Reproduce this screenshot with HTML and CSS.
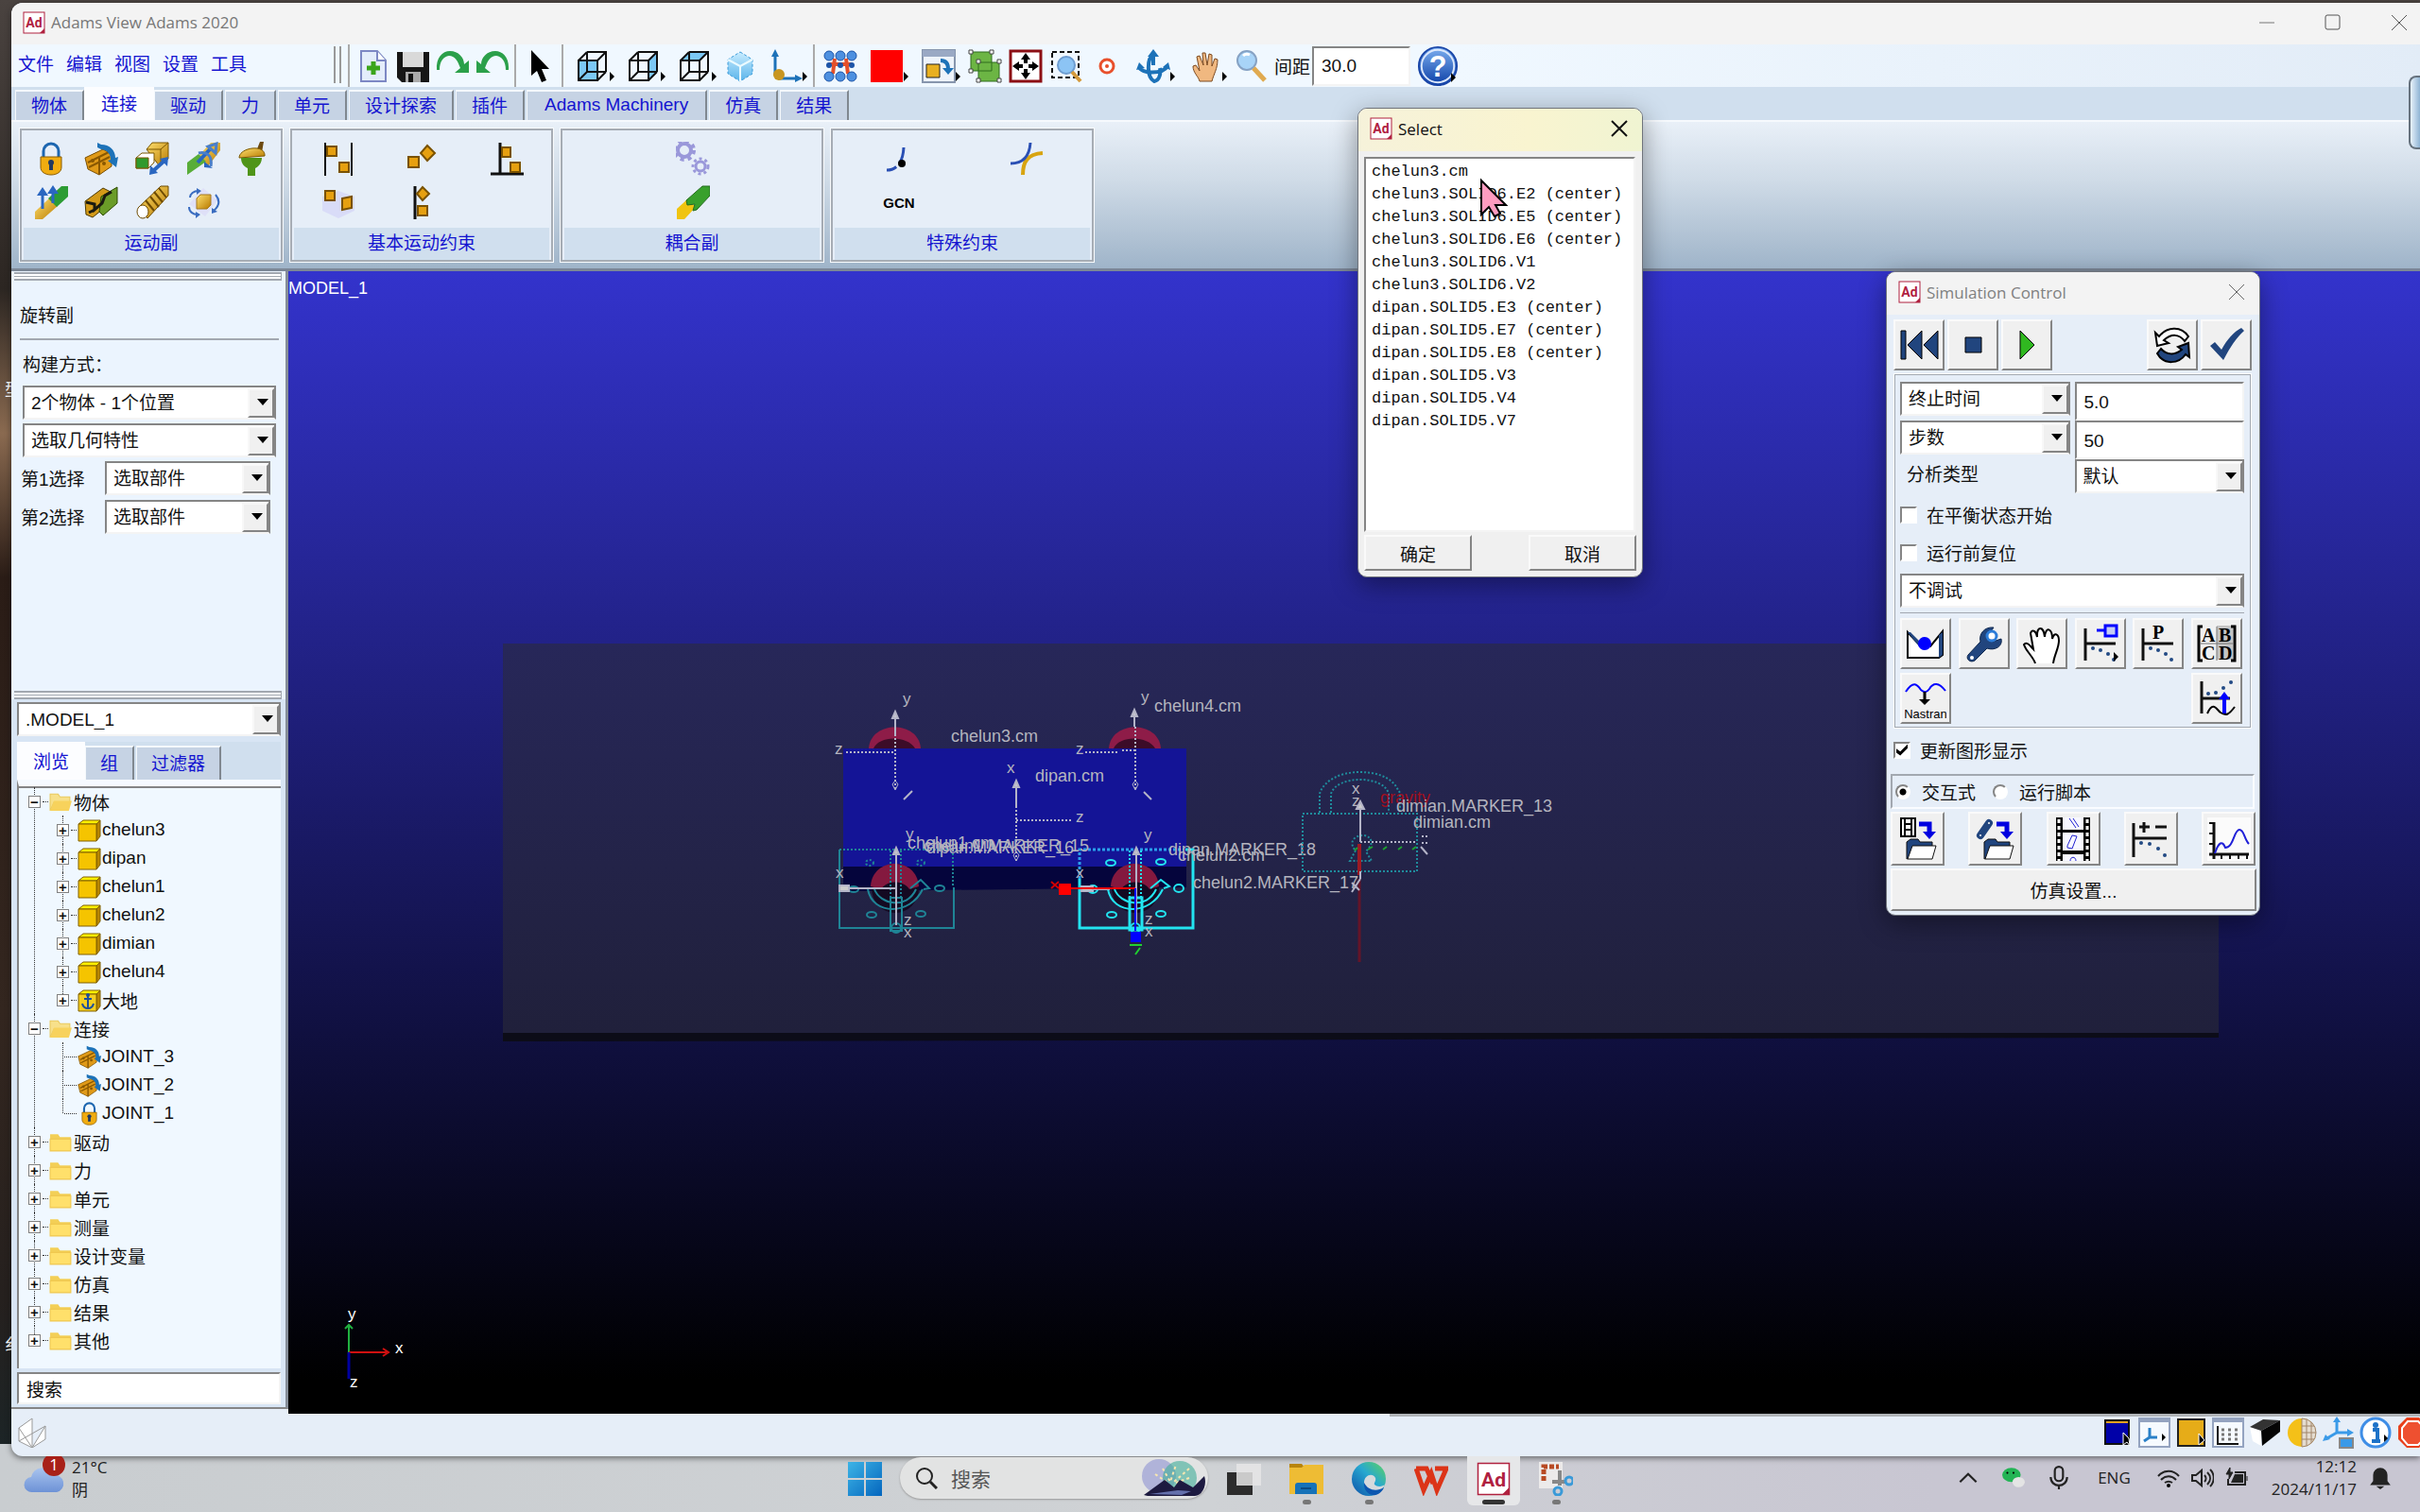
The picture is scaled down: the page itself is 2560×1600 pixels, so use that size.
FILE: index.html
```html
<!DOCTYPE html>
<html lang="zh">
<head>
    <meta charset="utf-8">
    <title>Adams View Adams 2020</title>
    <link rel="stylesheet" href="styles.css">
</head>
<body>
    <!-- shared icons -->
    <svg class="defs">
        <defs>
            <linearGradient id="gold" x1="0" y1="0" x2="1" y2="1"><stop offset="0" stop-color="#ffe070"/><stop offset="1" stop-color="#b87a00"/></linearGradient>
            <linearGradient id="sky" x1="0" y1="0" x2="0" y2="1"><stop offset="0" stop-color="#c8ecff"/><stop offset="1" stop-color="#5ab4ea"/></linearGradient>
            <linearGradient id="blueball" x1="0" y1="0" x2="0" y2="1"><stop offset="0" stop-color="#7db0f0"/><stop offset="1" stop-color="#0c3fa6"/></linearGradient>
            <linearGradient id="cloud" x1="0" y1="0" x2="0" y2="1"><stop offset="0" stop-color="#a9c4ee"/><stop offset="1" stop-color="#6d92d6"/></linearGradient>
            <linearGradient id="win" x1="0" y1="0" x2="1" y2="1"><stop offset="0" stop-color="#3cb4e6"/><stop offset="1" stop-color="#0566be"/></linearGradient>
            <linearGradient id="slab" x1="0" y1="0" x2="0" y2="1"><stop offset="0" stop-color="#272759"/><stop offset="1" stop-color="#20203b"/></linearGradient>
            <linearGradient id="edge" x1="1" y1="0" x2="0" y2="1"><stop offset="0" stop-color="#5fd45c"/><stop offset=".45" stop-color="#28a8d0"/><stop offset="1" stop-color="#0b4fa8"/></linearGradient>
        </defs>
        <symbol id="ad" viewBox="0 0 24 24">
            <rect x="1" y="1" width="22" height="22" fill="#fff" stroke="#b0213f" stroke-width="1"/>
            <path d="M23 18v5h-5z" fill="#b0213f"/>
            <text x="12" y="17" text-anchor="middle" class="ad-text">Ad</text>
        </symbol>
        <symbol id="folder" viewBox="0 0 24 20">
            <path d="M1 19V2h8l2 3h11v14z" fill="#f3cf56"/>
            <path d="M1 7h21v12H1z" fill="#ffe06b" stroke="#f0c850"/>
        </symbol>
        <symbol id="folder-open" viewBox="0 0 24 20">
            <path d="M1 19V2h8l2 3h10v5H5z" fill="#f7e08a" stroke="#e9c95a"/>
            <path d="M1 19l4-10h18l-3 10z" fill="#f7d25c"/>
        </symbol>
        <symbol id="part" viewBox="0 0 25 25">
            <path d="M1 6l5-4h18l-4 4z" fill="#fff000" stroke="#806000"/>
            <path d="M20 6l4-4v17l-4 5z" fill="#b88600" stroke="#806000"/>
            <path d="M1 6h19v18H1z" fill="#f5c400" stroke="#806000"/>
        </symbol>
        <symbol id="ground" viewBox="0 0 25 25">
            <path d="M1 6l5-4h18l-4 4z" fill="#fff000" stroke="#806000"/>
            <path d="M20 6l4-4v17l-4 5z" fill="#b88600" stroke="#806000"/>
            <path d="M1 6h19v18H1z" fill="#f5cf20" stroke="#806000"/>
            <path d="M11 8v13M7 11h8M5 16c1 4 3 5 6 5s5-1 6-5" fill="none" stroke="#1c4f9c" stroke-width="2"/>
            <circle cx="11" cy="7" r="2" fill="#1c4f9c"/>
        </symbol>
        <symbol id="lock" viewBox="0 0 36 36">
            <path d="M10 17V10a8 8 0 0 1 16 0v7" fill="none" stroke="#1d66b0" stroke-width="3"/>
            <path d="M7 16h22v11c0 5-5 8-11 8S7 32 7 27z" fill="#f0ac10" stroke="#8a5c00"/>
            <circle cx="18" cy="22" r="3" fill="#223a60"/><path d="M16 22h4v8h-4z" fill="#223a60"/>
        </symbol>
        <symbol id="hinge" viewBox="0 0 36 36">
            <path d="M1 17L20 8l9 5v13L16 35 4 29z" fill="#e09a18" stroke="#7a4e00"/>
            <path d="M4 22l22-11M5 27l22-11M16 35V17" stroke="#8a5800" stroke-width="2" fill="none"/>
            <circle cx="9" cy="20" r="2" fill="#8a5800"/><circle cx="21" cy="23" r="2" fill="#8a5800"/>
            <path d="M14 6V1l4 2c9 0 15 6 15 14l3-1-2 11-9-7 3-1c0-6-3-10-10-11z" fill="#1d72b8"/>
        </symbol>
        <symbol id="wirecube" viewBox="0 0 36 36">
            <path d="M3 12h20v21H3zM12 3h20v21M3 12l9-9M23 12l9-9M23 33l9-9M12 3v21h20M3 33l9-9" fill="none" stroke="#111" stroke-width="2"/>
        </symbol>
        <symbol id="plot-dots" viewBox="0 0 44 44">
            <path d="M6 6v34M6 22h32" stroke="#111" stroke-width="3"/>
            <circle cx="14" cy="27" r="2" fill="#234a84"/><circle cx="22" cy="29" r="2" fill="#234a84"/><circle cx="30" cy="33" r="2" fill="#234a84"/><circle cx="36" cy="39" r="2" fill="#234a84"/>
        </symbol>
        <symbol id="opened" viewBox="0 0 46 46">
            <path d="M24 7h11v9" fill="none" stroke="#0000e0" stroke-width="5"/><path d="M28 15h14l-7 8z" fill="#0000e0"/>
            <path d="M11 44V26l4-3h8l2 3h13v7z" fill="#21457e" stroke="#111"/>
            <path d="M12 44l5-14h25l-4 14z" fill="#fff" stroke="#111"/>
        </symbol>
    </svg>

    <div class="desktop">
        <div class="wallpaper">
            <span class="desk-label">型</span>
            <span class="desk-label low">纟</span>
        </div>

        <div class="window">
            <header class="titlebar">
                <svg class="logo"><use href="#ad"/></svg>
                <span class="title">Adams View Adams 2020</span>
                <button class="win-btn" aria-label="Minimize"><svg width="18" height="18"><path d="M1 9h16" stroke="#777"/></svg></button>
                <button class="win-btn" aria-label="Maximize"><svg width="18" height="18"><rect x="1" y="1" width="15" height="15" rx="2" fill="none" stroke="#555"/></svg></button>
                <button class="win-btn" aria-label="Close"><svg width="18" height="18"><path d="M1 1l16 16M17 1L1 17" stroke="#555"/></svg></button>
            </header>

            <div class="topbar">
                <nav class="menu">
                    <a href="#">文件</a><a href="#">编辑</a><a href="#">视图</a><a href="#">设置</a><a href="#">工具</a>
                </nav>
                <span class="grip"></span>
                <div class="tools">
                    <button class="tool" aria-label="New"><svg viewBox="0 0 36 36"><path d="M5 2h17l9 10v22H5z" fill="#e4edfb" stroke="#7d88c4" stroke-width="2"/><path d="M22 2v10h9" fill="#fff" stroke="#7d88c4" stroke-width="2"/><path d="M18 13v14M11 20h14" stroke="#3ba51c" stroke-width="5"/></svg></button>
                    <button class="tool" aria-label="Save"><svg viewBox="0 0 36 36"><path d="M1 3h34v32H6l-5-5z" fill="#161616"/><path d="M7 3h22v16H7z" fill="#d9d9d9"/><path d="M10 24h16v11H10z" fill="#aaa"/><path d="M13 26h5v9h-5z" fill="#111"/></svg></button>
                    <button class="tool" aria-label="Redo"><svg viewBox="0 0 36 36"><path d="M1 22C0 9 7 2 15 2c9 0 15 7 15 14l5-4v13H20l6-5C23 12 20 7 14 7 8 8 4 13 4 22z" fill="#2ba04a"/></svg></button>
                    <button class="tool" aria-label="Undo"><svg viewBox="0 0 36 36"><path d="M35 22C36 9 29 2 21 2c-9 0-15 7-15 14l-5-4v13h15l-6-5c3-8 6-13 12-13 6 1 10 6 10 15z" fill="#2ba04a"/></svg></button>
                </div>
                <div class="tools">
                    <button class="tool" aria-label="Pointer"><svg viewBox="0 0 36 36"><path d="M9 1v27l6-5 5 12 5-2-5-12h8z" fill="#000"/></svg></button>
                </div>
                <div class="tools">
                    <button class="tool drop" aria-label="Front view"><svg viewBox="0 0 36 36"><path d="M3 12h20v21H3z" fill="#7cc8f4"/><use href="#wirecube"/></svg></button>
                    <button class="tool drop" aria-label="Side view"><svg viewBox="0 0 36 36"><path d="M23 12l9-9v21l-9 9z" fill="#7cc8f4"/><use href="#wirecube"/></svg></button>
                    <button class="tool drop" aria-label="Top view"><svg viewBox="0 0 36 36"><path d="M3 12l9-9h20l-9 9z" fill="#7cc8f4"/><use href="#wirecube"/></svg></button>
                    <button class="tool" aria-label="Isometric view"><svg viewBox="0 0 36 36"><path d="M18 3l13 8v15l-13 8-13-8V11z" fill="url(#sky)" stroke="#3a9ad8" stroke-dasharray="3 2"/><path d="M5 11l13 7 13-7M18 18v16" stroke="#eafaff" stroke-width="2" fill="none"/></svg></button>
                    <button class="tool drop" aria-label="Orientation"><svg viewBox="0 0 36 36"><path d="M7 4v24M10 31h20" stroke="#1d72b8" stroke-width="3"/><path d="M7 0l4 8H3zM36 31l-8 4v-8z" fill="#1d72b8"/><circle cx="11" cy="27" r="6" fill="#c89620"/></svg></button>
                </div>
                <div class="tools spaced">
                    <button class="tool" aria-label="Icons"><svg viewBox="0 0 36 36"><path d="M12 10l-2 16M24 10l2 16M6 16h24" stroke="#e4502a" stroke-width="4"/><g fill="#4d90e0" stroke="#1c54a8"><circle cx="6" cy="7" r="5"/><circle cx="18" cy="7" r="5"/><circle cx="30" cy="7" r="5"/><circle cx="6" cy="29" r="5"/><circle cx="18" cy="29" r="5"/><circle cx="30" cy="29" r="5"/></g><g fill="#1c54a8"><circle cx="6" cy="17" r="3"/><circle cx="18" cy="17" r="3"/><circle cx="30" cy="17" r="3"/></g></svg></button>
                    <button class="tool drop" aria-label="Color"><svg viewBox="0 0 36 36"><path d="M1 1h34v34H1z" fill="#f00"/></svg></button>
                    <button class="tool drop" aria-label="Rotate view"><svg viewBox="0 0 36 36"><path d="M1 1h34v34H1z" fill="#edf3fa" stroke="#8796ad" stroke-width="2"/><path d="M1 1h34v7H1z" fill="#9aa9c4"/><path d="M5 16h14v14H5z" fill="#e8b020" stroke="#222"/><path d="M20 12c6 0 8 4 8 9" fill="none" stroke="#1d72b8" stroke-width="4"/><path d="M22 20h12l-6 7z" fill="#1d72b8"/></svg></button>
                    <button class="tool" aria-label="Group"><svg viewBox="0 0 36 36"><path d="M3 3h22v20H3zM11 14h22v20H11z" fill="#6cb544" stroke="#2f6d1c"/><g fill="#fff" stroke="#444"><path d="M1 1h4v4H1zM23 1h4v4h-4zM1 21h4v4H1zM9 31h4v4H9zM31 31h4v4h-4zM31 11h4v4h-4zM9 11h4v4H9z"/></g></svg></button>
                    <button class="tool" aria-label="Fit"><svg viewBox="0 0 36 36"><path d="M2 2h32v32H2z" fill="#fff" stroke="#8c0f14" stroke-width="3"/><path d="M18 4l5 7h-3v4h-4v-4h-3zM18 32l5-7h-3v-4h-4v4h-3zM4 18l7-5v3h4v4h-4v3zM32 18l-7-5v3h-4v4h4v3z"/></svg></button>
                    <button class="tool" aria-label="Zoom box"><svg viewBox="0 0 36 36"><path d="M3 3h28v27H3z" fill="none" stroke="#111" stroke-width="2" stroke-dasharray="5 3"/><circle cx="18" cy="17" r="9" fill="#8cc4f4" stroke="#6d9cd0" stroke-width="2"/><path d="M24 24l9 10" stroke="#d49a3c" stroke-width="4"/></svg></button>
                    <button class="tool" aria-label="Center"><svg viewBox="0 0 36 36"><circle cx="18" cy="18" r="7" fill="#fff" stroke="#e8502c" stroke-width="3"/><circle cx="18" cy="18" r="2" fill="#e8502c"/></svg></button>
                    <button class="tool drop" aria-label="Rotate"><svg viewBox="0 0 36 36"><path d="M18 3v14M18 6c-7 4-7 24 1 28 6-1 7-9 6-14M3 19c2 7 25 8 30-1" fill="none" stroke="#1d72b8" stroke-width="4"/><path d="M18 0l6 8H12zM0 22l3-8 6 6zM36 22l-2-8-6 5z" fill="#1d72b8"/></svg></button>
                    <button class="tool drop" aria-label="Pan"><svg viewBox="0 0 36 36"><path d="M12 34c-1-5-7-9-7-16l3-1 4 6L9 8l3-1 4 10-1-13h3l2 13 2-12 3 1v12l3-8 3 1c0 10-4 15-6 23z" fill="#f0b880" stroke="#7c4a20"/></svg></button>
                    <button class="tool" aria-label="Zoom"><svg viewBox="0 0 36 36"><circle cx="13" cy="12" r="10" fill="#a8d4f8" stroke="#86a2c4" stroke-width="2"/><path d="M9 7c2-2 5-2 7-1" stroke="#fff" stroke-width="3" fill="none"/><path d="M20 20l12 13" stroke="#e0aa50" stroke-width="5"/></svg></button>
                    <label class="step" for="step">间距</label>
                    <input class="step-input" id="step" type="text" value="30.0">
                    <button class="help drop" aria-label="Help"><svg viewBox="0 0 46 46"><circle cx="23" cy="23" r="21" fill="url(#blueball)" stroke="#1a46a8" stroke-width="2"/><circle cx="23" cy="23" r="18" fill="none" stroke="#dce8fc" stroke-width="2"/><text x="23" y="34" text-anchor="middle" class="help-text">?</text></svg></button>
                </div>
            </div>

            <div class="tabs">
                <button class="tab">物体</button>
                <button class="tab active">连接</button>
                <button class="tab">驱动</button>
                <button class="tab">力</button>
                <button class="tab">单元</button>
                <button class="tab">设计探索</button>
                <button class="tab">插件</button>
                <button class="tab latin">Adams Machinery</button>
                <button class="tab">仿真</button>
                <button class="tab">结果</button>
            </div>

            <div class="ribbon">
                <section class="group">
                    <div class="icons five">
                        <svg viewBox="0 0 36 36"><use href="#lock"/></svg>
                        <svg viewBox="0 0 36 36"><use href="#hinge"/></svg>
                        <svg viewBox="0 0 36 36"><path d="M12 8L18 1h17v17l-9 8z" fill="url(#gold)" stroke="#7a5600"/><path d="M12 8h15l8-7M27 8v16" stroke="#7a5600" fill="none"/><path d="M1 17l6-5h13v10l-6 6H1z" fill="#fff" stroke="#7a5600"/><path d="M1 17h13v11H1z" fill="#2f9a2c" stroke="#7a5600"/><path d="M20 30L31 20" stroke="#2a66c0" stroke-width="4"/><path d="M35 16l-1 10-8-8zM15 35l1-10 8 8z" fill="#2a66c0"/></svg>
                        <svg viewBox="0 0 36 36"><path d="M13 15L26 1h10v8L23 26z" fill="url(#gold)"/><path d="M1 22l12-9 8 8L1 35z" fill="#58ad38"/><path d="M12 22L26 7" stroke="#2a66c0" stroke-width="4"/><path d="M32 2l-1 10-8-7zM13 12c8-2 15 2 13 14" fill="none" stroke="#4a7fca" stroke-width="3"/><path d="M19 21l9 7-9-1z" fill="#2a66c0"/></svg>
                        <svg viewBox="0 0 36 36"><path d="M21 10l4-10 4 0-2 11z" fill="#6d4a10"/><path d="M3 17C3 6 31 2 30 15z" fill="url(#gold)" stroke="#7a5600"/><path d="M5 17h22c0 5-3 9-7 11v8h-8v-8c-4-2-7-5-7-11z" fill="#4f9418"/></svg>
                        <svg viewBox="0 0 36 36"><path d="M1 28L16 14l9 8L9 36H1z" fill="url(#gold)"/><path d="M15 14L29 1h7v11L24 23z" fill="#2c9c34"/><path d="M9 25V7M20 19V5" stroke="#2a66c0" stroke-width="3"/><path d="M3 11l6-9 6 9zM14 9l6-9 6 9z" fill="#2a66c0"/></svg>
                        <svg viewBox="0 0 36 36"><path d="M1 17L20 3l8 4-3 14L9 34l-7-3z" fill="#d39a18" stroke="#4d3a00"/><path d="M18 12L35 2v17L20 32l-4-4z" fill="#6a9c28" stroke="#2c4a00"/><path d="M2 18l9 2v6l8-7 3-8 7-4M11 26l-6 3" stroke="#1a1a10" stroke-width="3" fill="none"/></svg>
                        <svg viewBox="0 0 36 36"><path d="M3 24L27 1h8v10L13 35z" fill="url(#gold)" stroke="#6d4a00"/><path d="M11 16l9 11M16 12l9 11M20 7l9 11M25 3l8 10" stroke="#6d4a00" stroke-width="2"/><ellipse cx="8" cy="28" rx="6" ry="7" fill="#fff" stroke="#6d4a00"/></svg>
                        <svg viewBox="0 0 36 36"><path d="M18 3l15 13-13 17L3 20z" fill="#dfe0f8"/><path d="M11 14l4-4h11v11l-4 4H11z" fill="url(#gold)" stroke="#a47820"/><path d="M4 13c0-4 4-7 9-7M31 10c5 6 4 12-2 17M3 23c0 5 4 8 9 8" stroke="#3a6cc0" stroke-width="2" fill="none"/><path d="M11 3l5 3-5 4zM10 28l5 3-5 4zM27 24v6l6-2z" fill="#3a6cc0"/></svg>
                    </div>
                    <h2>运动副</h2>
                </section>
                <section class="group">
                    <div class="icons three">
                        <svg viewBox="0 0 36 36"><path d="M4 1v35M32 1v35" stroke="#111" stroke-width="2"/><path d="M6 5h10v10H6zM19 22h10v10H19z" fill="#e6a010" stroke="#7a5200" stroke-width="2"/></svg>
                        <svg viewBox="0 0 36 36"><path d="M3 16h11v11H3zM23 4l8 8-8 8-7-8z" fill="#e6a010" stroke="#7a5200" stroke-width="2"/></svg>
                        <svg viewBox="0 0 36 36"><path d="M11 1v33M1 34h35" stroke="#111" stroke-width="3"/><path d="M13 6h9v10h-9zM22 22h10v10H22z" fill="#e6a010" stroke="#7a5200" stroke-width="2"/></svg>
                        <svg viewBox="0 0 36 36"><path d="M18 6l17 6v15l-17 8L1 27V12z" fill="#d9dcf8"/><path d="M4 6h10v10H4zM22 14l10-2v12l-10 2z" fill="#e6a010" stroke="#7a5200" stroke-width="2"/></svg>
                        <svg viewBox="0 0 36 36"><path d="M10 1v35" stroke="#111" stroke-width="3"/><path d="M18 2l7 7-7 7-6-7zM13 22h10v10H13z" fill="#e6a010" stroke="#7a5200" stroke-width="2"/></svg>
                    </div>
                    <h2>基本运动约束</h2>
                </section>
                <section class="group">
                    <div class="icons">
                        <svg viewBox="0 0 36 36"><g fill="none" stroke="#9a98da"><circle cx="9" cy="9" r="7" stroke-width="4"/><circle cx="9" cy="9" r="10" stroke-width="4" stroke-dasharray="4 4"/><circle cx="26" cy="26" r="5" stroke-width="3"/><circle cx="26" cy="26" r="8" stroke-width="3" stroke-dasharray="3 3"/></g></svg>
                        <svg viewBox="0 0 36 36"><path d="M1 25L12 15l9 8L9 36H1z" fill="#f0c410"/><path d="M11 16L28 1h8v10L22 26l-4 1 2-7-8 1z" fill="#38a02c" stroke="#256c20"/></svg>
                    </div>
                    <h2>耦合副</h2>
                </section>
                <section class="group">
                    <div class="icons two">
                        <svg viewBox="0 0 36 36"><path d="M4 30c7 0 17-4 18-24" fill="none" stroke="#2a4fb4" stroke-width="3" stroke-dasharray="11 5 30"/><circle cx="20" cy="23" r="4"/></svg>
                        <svg viewBox="0 0 36 36"><path d="M14 35c0-14 5-22 21-23" fill="none" stroke="#d8a410" stroke-width="4"/><path d="M1 23c13 0 20-7 21-22" fill="none" stroke="#2a4fb4" stroke-width="3"/></svg>
                        <svg viewBox="0 0 36 36"><text x="17" y="24" text-anchor="middle" class="gcn">GCN</text></svg>
                    </div>
                    <h2>特殊约束</h2>
                </section>
            </div>

            <div class="main">
                <aside class="side">
                    <div class="rails"></div>
                    <form class="joint-form">
                        <h3>旋转副</h3>
                        <label for="method">构建方式：</label>
                        <span class="combo"><select id="method"><option>2个物体 - 1个位置</option></select></span>
                        <span class="combo"><select aria-label="几何特性"><option>选取几何特性</option></select></span>
                        <div class="pick"><label for="first">第1选择</label><span class="combo"><select id="first"><option>选取部件</option></select></span></div>
                        <div class="pick"><label for="second">第2选择</label><span class="combo"><select id="second"><option>选取部件</option></select></span></div>
                    </form>
                    <div class="rails"></div>
                    <div class="browser">
                        <span class="combo"><select aria-label="模型"><option>.MODEL_1</option></select></span>
                        <div class="tabs side-tabs">
                            <button class="tab active">浏览</button>
                            <button class="tab">组</button>
                            <button class="tab">过滤器</button>
                        </div>
                        <ul class="tree">
                            <li><div class="row"><button class="toggle">−</button><i></i><svg><use href="#folder-open"/></svg>物体</div>
                                <ul>
                                    <li><div class="row"><button class="toggle">+</button><i></i><svg><use href="#part"/></svg>chelun3</div></li>
                                    <li><div class="row"><button class="toggle">+</button><i></i><svg><use href="#part"/></svg>dipan</div></li>
                                    <li><div class="row"><button class="toggle">+</button><i></i><svg><use href="#part"/></svg>chelun1</div></li>
                                    <li><div class="row"><button class="toggle">+</button><i></i><svg><use href="#part"/></svg>chelun2</div></li>
                                    <li><div class="row"><button class="toggle">+</button><i></i><svg><use href="#part"/></svg>dimian</div></li>
                                    <li><div class="row"><button class="toggle">+</button><i></i><svg><use href="#part"/></svg>chelun4</div></li>
                                    <li><div class="row"><button class="toggle">+</button><i></i><svg><use href="#ground"/></svg>大地</div></li>
                                </ul>
                            </li>
                            <li><div class="row"><button class="toggle">−</button><i></i><svg><use href="#folder-open"/></svg>连接</div>
                                <ul>
                                    <li><div class="row leaf"><i></i><svg><use href="#hinge"/></svg>JOINT_3</div></li>
                                    <li><div class="row leaf"><i></i><svg><use href="#hinge"/></svg>JOINT_2</div></li>
                                    <li><div class="row leaf"><i></i><svg><use href="#lock"/></svg>JOINT_1</div></li>
                                </ul>
                            </li>
                            <li><div class="row"><button class="toggle">+</button><i></i><svg><use href="#folder"/></svg>驱动</div></li>
                            <li><div class="row"><button class="toggle">+</button><i></i><svg><use href="#folder"/></svg>力</div></li>
                            <li><div class="row"><button class="toggle">+</button><i></i><svg><use href="#folder"/></svg>单元</div></li>
                            <li><div class="row"><button class="toggle">+</button><i></i><svg><use href="#folder"/></svg>测量</div></li>
                            <li><div class="row"><button class="toggle">+</button><i></i><svg><use href="#folder"/></svg>设计变量</div></li>
                            <li><div class="row"><button class="toggle">+</button><i></i><svg><use href="#folder"/></svg>仿真</div></li>
                            <li><div class="row"><button class="toggle">+</button><i></i><svg><use href="#folder"/></svg>结果</div></li>
                            <li><div class="row"><button class="toggle">+</button><i></i><svg><use href="#folder"/></svg>其他</div></li>
                        </ul>
                        <input class="search" type="text" value="搜索" aria-label="搜索">
                    </div>
                </aside>

                <!-- 3D view -->
                <div class="view">
                    <svg class="scene">
                        <g transform="translate(-305 -287)">
                            <text x="305" y="311" fill="#fff">MODEL_1</text>
                            <path d="M532 681h1815v412H532z" fill="url(#slab)"/>
                            <path d="M532 1093h1815v5l-560 1-600 2-655 1z" fill="#0c0c18"/>

                            <!-- rear wheels -->
                            <g id="rear">
                                <path d="M919 792c2-30 53-30 55 0z" fill="#8e1c48"/>
                                <path d="M924 792c6-14 36-14 44 0z" fill="#3c0c28"/>
                            </g>
                            <use href="#rear" x="254"/>
                            <!-- chassis -->
                            <path d="M892 792h363v125H892z" fill="#141496"/>
                            <path d="M892 917h363v22l-363 4z" fill="#05053c"/>

                            <g class="axis">
                                <path d="M947 755v22M1200 755v14M1075 828v25"/>
                                <path d="M947 777v58M895 796h52M1201 769v66M1148 796h36M1187 794h14M1075 853v60M1075 868h60" stroke-dasharray="2 2"/>
                                <path d="M956 846l9-9M1210 838l8 8"/>
                                <path d="M944 760l3-7 3 7zM1197 758l3-7 3 7zM1072 833l3-7 3 7z" fill="#c4c4cc"/>
                                <path d="M944 830l3 6 3-6-3-4zM1198 830l3 6 3-6-3-4zM1072 905l3 6 3-6-3-4z" stroke-width="1"/>
                            </g>

                            <!-- front wheels -->
                            <g id="front">
                                <ellipse cx="947" cy="940" rx="25" ry="26" fill="#140a22"/>
                                <path d="M921 938c2-32 49-32 51 0l-10 3c-6-10-24-10-30 0z" fill="#84193f"/>
                            </g>
                            <use href="#front" x="254"/>

                            <g fill="none" stroke="#1f8496" stroke-width="2">
                                <path d="M888 899h120v40" stroke-dasharray="2 2"/>
                                <path d="M888 899v83h121v-43"/>
                                <path d="M942 900v50M953 900v50" stroke-dasharray="2 2"/>
                                <path d="M942 950h12v35h-12zM918 941c5 28 45 28 58 0M925 941c6 16 34 22 44 0M963 940l11-9 9 9-6 1"/>
                                <circle cx="948" cy="982" r="5"/>
                                <ellipse cx="903" cy="941" rx="5" ry="3"/><ellipse cx="994" cy="940" rx="5" ry="3"/>
                                <ellipse cx="922" cy="968" rx="5" ry="3"/><ellipse cx="974" cy="967" rx="5" ry="3"/>
                                <ellipse cx="920" cy="913" rx="4" ry="3" stroke-dasharray="2 2"/><ellipse cx="974" cy="913" rx="4" ry="3" stroke-dasharray="2 2"/>
                            </g>
                            <g fill="none" stroke="#22e4f0" stroke-width="3">
                                <path d="M1142 930v-31h110" stroke-dasharray="3 2" stroke="#2aa0ec"/>
                                <path d="M1142 930v52h120v-83h-8"/>
                                <path d="M1195 900v50M1207 900v50" stroke-dasharray="2 2" stroke-width="2"/>
                                <path d="M1195 950h13v34h-13z"/>
                                <g stroke-width="2">
                                    <path d="M1172 941c5 28 45 28 58 0M1179 941c6 16 34 22 44 0M1217 940l11-9 9 7-6 2"/>
                                    <circle cx="1201" cy="982" r="5"/>
                                    <ellipse cx="1156" cy="941" rx="5" ry="4"/><ellipse cx="1247" cy="940" rx="5" ry="4"/>
                                    <ellipse cx="1176" cy="968" rx="5" ry="3"/><ellipse cx="1228" cy="967" rx="5" ry="3"/>
                                    <ellipse cx="1175" cy="913" rx="5" ry="3"/><ellipse cx="1228" cy="912" rx="5" ry="3"/>
                                </g>
                            </g>
                            <g class="axis">
                                <path d="M948 897v82M890 940h57M1202 897v80M1144 941h30"/>
                                <path d="M888 937h10v6h-10zM1144 938h12v5h-12z" fill="#ccc"/>
                                <path d="M945 904l3-7 3 7zM1199 904l3-7 3 7z" fill="#c4c4cc"/>
                            </g>
                            <path d="M1132 940h69" stroke="#f00000" stroke-width="2"/>
                            <path d="M1120 935h13v12h-13z" fill="#f00"/>
                            <path d="M1201 940v45" stroke="#0000ff" stroke-width="2"/>
                            <path d="M1196 986h11v11h-11z" fill="#00f"/>
                            <path d="M1195 1000h13M1206 1003l-5 7" stroke="#20d030" stroke-width="2"/>
                            <path d="M1112 933l8 7M1120 933l-8 7" stroke="#d00000" stroke-width="2"/>

                            <g class="letters">
                                <text x="955" y="745">y</text><text x="1207" y="743">y</text>
                                <text x="883" y="798">z</text><text x="1138" y="798">z</text>
                                <text x="1065" y="818">x</text><text x="1138" y="870">z</text>
                                <text x="958" y="888">y</text><text x="1210" y="889">y</text>
                                <text x="884" y="929">x</text><text x="1138" y="929">x</text>
                                <text x="956" y="979">z</text><text x="1211" y="978">z</text>
                                <text x="956" y="992">x</text><text x="1211" y="991">x</text>
                                <text x="1430" y="840">x</text><text x="1430" y="853">z</text>
                            </g>
                            <g class="labels">
                                <text x="1006" y="785">chelun3.cm</text>
                                <text x="1221" y="753">chelun4.cm</text>
                                <text x="1095" y="827">dipan.cm</text>
                                <text x="960" y="898">chelun1.cm</text>
                                <text x="980" y="903">dipan.MARKER_16</text>
                                <text x="977" y="901">chelun1.MARKER_15</text>
                                <text x="1236" y="905">dipan.MARKER_18</text>
                                <text x="1246" y="911">chelun2.cm</text>
                                <text x="1262" y="940">chelun2.MARKER_17</text>
                            </g>

                            <!-- ground lock and gravity -->
                            <g fill="none" stroke="#1f8c9c" stroke-width="2" stroke-dasharray="2 2">
                                <path d="M1378 861h121v61h-121z"/>
                                <path d="M1396 860v-20c4-14 22-23 42-23 16 0 30 4 38 14l5 8v20"/>
                                <path d="M1408 860v-20c6-20 56-20 61 0v20"/>
                                <path d="M1433 899c-12-16 22-22 17-4l-5 6 6 10h-23l6-11"/>
                            </g>
                            <path d="M1438 893v33" stroke="#9c1a24" stroke-width="4"/>
                            <path d="M1438 930v88" stroke="#641428" stroke-width="3"/>
                            <g class="axis"><path d="M1439 850v41M1439 922v8"/><path d="M1439 891h60M1504 885h6M1504 892h6" stroke-dasharray="2 2"/><path d="M1503 896l7 8M1439 930l-9 14M1430 934l8 8"/><path d="M1435 856l4-8 4 8z" fill="#ccc"/></g>
                            <path d="M1433 900l3-3M1447 899l5-3M1463 899l4-3M1479 899l4-3M1494 899l4-3" stroke="#1ea030" stroke-width="2"/>
                            <text x="1460" y="850" fill="#a01020">gravity</text>
                            <g class="labels">
                                <text x="1477" y="859">dimian.MARKER_13</text>
                                <text x="1495" y="876">dimian.cm</text>
                            </g>

                            <!-- view triad -->
                            <path d="M369 1431v-28M365 1406l4-4 4 4" stroke="#20b040" stroke-width="2" fill="none"/>
                            <path d="M369 1431h40M405 1427l6 4-6 4" stroke="#d01010" stroke-width="2" fill="none"/>
                            <path d="M369 1431v28" stroke="#0000a0" stroke-width="3"/>
                            <g class="letters bright">
                                <text x="368" y="1396">y</text><text x="418" y="1432">x</text><text x="370" y="1468">z</text>
                            </g>
                        </g>
                    </svg>
                </div>
            </div>

            <footer class="status">
                <svg class="mesh" viewBox="0 0 30 32"><path d="M1 11L15 1v31L1 11v14l14 7 14-9V9L15 32M1 25L29 9" fill="#fff" stroke="#999"/></svg>
                <div class="status-icons">
                    <button aria-label="Background"><svg viewBox="0 0 34 34"><path d="M4 4h25v25H4z" fill="#0000a8" stroke="#111" stroke-width="2"/><path d="M5 5h23v2H5z" fill="#e0a020"/><path d="M23 17v13l4-3 3 4-1-8z" fill="#000" stroke="#fff"/></svg></button>
                    <button aria-label="Triad"><svg viewBox="0 0 34 34"><path d="M1 2h32v30H1z" fill="#f6faff" stroke="#94a3c0" stroke-width="2"/><path d="M1 2h32v4H1z" fill="#94a3c0"/><path d="M12 12v10l-6 4M12 22h8" fill="none" stroke="#2a80c8" stroke-width="3"/><path d="M25 18l4 4-4 4z"/></svg></button>
                    <button aria-label="Render"><svg viewBox="0 0 34 34"><path d="M3 3h28v28H3z" fill="#e6ac18" stroke="#222" stroke-width="2"/><path d="M25 18v12l6-5z" fill="#000" stroke="#fff"/></svg></button>
                    <button aria-label="Grid"><svg viewBox="0 0 34 34"><path d="M1 2h32v30H1z" fill="#f6faff" stroke="#94a3c0" stroke-width="2"/><path d="M1 2h32v4H1z" fill="#94a3c0"/><path d="M6 10v19h22" fill="none" stroke="#111" stroke-width="2"/><path d="M10 14h18M10 19h18M10 24h18" stroke="#777" stroke-width="3" stroke-dasharray="3 4"/></svg></button>
                    <button aria-label="Perspective"><svg viewBox="0 0 34 34"><path d="M1 11l12 4v16L4 26z" fill="#fff"/><path d="M1 11L15 3l18 1-20 11z" fill="#333"/><path d="M13 15L33 4v12L14 31z" fill="#050505"/></svg></button>
                    <button aria-label="Shading"><svg viewBox="0 0 34 34"><circle cx="17" cy="17" r="15" fill="#f4c018"/><path d="M17 2a15 15 0 0 1 0 30z" fill="#e4dcd0" stroke="#a08468"/><path d="M22 3v28M27 6v22M17 10h13M17 17h15M17 24h13" stroke="#a08468"/></svg></button>
                    <button aria-label="Axes"><svg viewBox="0 0 34 34"><path d="M15 4v13L3 24M15 17h12" fill="none" stroke="#3a9ae8" stroke-width="3"/><path d="M15 0l4 6h-8zM0 26l3-7 5 5zM33 17l-7 4v-8z" fill="#3a9ae8"/><path d="M18 23h14v10H18z" fill="#3a9ae8" stroke="#888" stroke-width="2"/></svg></button>
                    <button aria-label="Info"><svg viewBox="0 0 34 34"><circle cx="17" cy="17" r="15" fill="#fff" stroke="#3f8ee6" stroke-width="3"/><path d="M14 14h5v12M13 26h9" stroke="#1d72c8" stroke-width="4" fill="none"/><circle cx="17" cy="9" r="3" fill="#1d72c8"/><path d="M26 19l4 4-4 4z"/></svg></button>
                    <button aria-label="Stop"><svg viewBox="0 0 34 34"><path d="M11 1h13l9 9v14l-9 9H11l-9-9V10z" fill="#e8401c"/><path d="M12 5h11l7 7v11l-7 7H12l-6-7V12z" fill="#ee5030" stroke="#fff" stroke-width="2"/></svg></button>
                </div>
            </footer>
        </div>
    </div>

    <footer class="taskbar">
        <div class="weather">
            <svg viewBox="0 0 44 44"><path d="M9 38a8 8 0 0 1-1-16 12 12 0 0 1 23-2 9 9 0 0 1 4 18z" fill="url(#cloud)"/><circle cx="32" cy="9" r="12" fill="#a82018"/><text x="32" y="15" text-anchor="middle" class="badge">1</text></svg>
            <div><b>21°C</b><span>阴</span></div>
        </div>
        <div class="apps">
            <button class="app" aria-label="Start"><svg viewBox="0 0 36 36"><path d="M0 0h17v17H0zM19 0h17v17H19zM0 19h17v17H0zM19 19h17v17H19z" fill="url(#win)"/></svg></button>
            <div class="task-search">
                <svg viewBox="0 0 24 24"><circle cx="10" cy="10" r="8" fill="none" stroke="#222" stroke-width="2"/><path d="M16 16l7 7" stroke="#222" stroke-width="3"/></svg>
                <input type="text" value="搜索" aria-label="任务栏搜索">
                <svg class="art" viewBox="0 0 70 40"><circle cx="20" cy="18" r="18" fill="#8f92d2" opacity=".6"/><circle cx="42" cy="20" r="18" fill="#3fae98" opacity=".6"/><path d="M24 10l8 14 6-18M16 16l12 8M52 10L36 24M52 20l-14 5" fill="none" stroke="#f8e6b0" stroke-width="2" stroke-dasharray="3 3"/><path d="M4 38l22-16 10 8 6-8 14 8 12-12c3 8-1 20-10 21H8z" fill="#1d1a40"/><path d="M10 37l30-4 14 1-10 4z" fill="#6470ac"/></svg>
            </div>
            <button class="app" aria-label="Task view"><svg viewBox="0 0 36 36"><path d="M0 11h27v24H0z" fill="#2c2c2c"/><path d="M10 2h26v23H10z" fill="#e6e6e6" opacity=".85"/></svg></button>
            <button class="app open" aria-label="Explorer"><svg viewBox="0 0 36 36"><path d="M0 2h13l4 5H0z" fill="#b8840c"/><path d="M0 6h13l3-3h20v31H0z" fill="#eebc34"/><path d="M6 34V25c0-2 1-3 3-3h17c2 0 3 1 3 3v9z" fill="#1672b8"/><path d="M12 28h11" stroke="#0c4c84" stroke-width="2"/></svg></button>
            <button class="app open" aria-label="Edge"><svg viewBox="0 0 36 36"><circle cx="18" cy="18" r="18" fill="url(#edge)"/><path d="M13 22c0-8 9-11 12-5 1 3-2 5-1 7 3 3 9 2 11 0-3 6-9 11-14 10-5-2-8-6-8-12z" fill="#d6dadd"/><path d="M13 22c-1 6 3 12 9 13 5 1 10-3 12-8-8 5-17 3-21-5z" fill="#0d57b0"/></svg></button>
            <button class="app" aria-label="WPS"><svg viewBox="0 0 36 36"><path d="M2 7h11l7 16M2 7l8 23 8-18 6 18 10-23H22" fill="none" stroke="#dc3418" stroke-width="5"/></svg></button>
            <button class="app open current" aria-label="Adams"><svg><use href="#ad"/></svg></button>
            <button class="app open" aria-label="Snipping"><svg viewBox="0 0 36 36"><path d="M0 0h25v28H0z" fill="#eceaea"/><path d="M5 20V5h16" fill="none" stroke="#b84a24" stroke-width="5" stroke-dasharray="5 2"/><path d="M22 9v16M14 21h14" stroke="#888" stroke-width="4"/><circle cx="32" cy="20" r="4" fill="none" stroke="#3a9ad8" stroke-width="3"/><circle cx="20" cy="31" r="4" fill="none" stroke="#3a9ad8" stroke-width="3"/></svg></button>
        </div>
        <div class="tray">
            <svg class="small" viewBox="0 0 24 24"><path d="M4 16l8-8 8 8" fill="none" stroke="#222" stroke-width="2"/></svg>
            <svg class="small" viewBox="0 0 24 24"><ellipse cx="10" cy="9" rx="9" ry="7" fill="#23b455"/><ellipse cx="17" cy="16" rx="6" ry="5" fill="#e4e4e4"/><circle cx="6" cy="7" r="1"/><circle cx="12" cy="7" r="1"/></svg>
            <svg class="small" viewBox="0 0 24 24"><rect x="8" y="1" width="8" height="14" rx="4" fill="none" stroke="#222" stroke-width="2"/><path d="M4 11c0 11 16 11 16 0M12 19v4" fill="none" stroke="#222" stroke-width="2"/></svg>
            <span class="lang">ENG</span>
            <div class="sys">
                <svg viewBox="0 0 24 24"><path d="M1 10c6-7 16-7 22 0M4 14c5-5 11-5 16 0M8 17c3-2 5-2 8 0" fill="none" stroke="#222" stroke-width="2"/><circle cx="12" cy="20" r="2"/></svg>
                <svg viewBox="0 0 24 24"><path d="M1 9h4l6-5v16l-6-5H1z" fill="none" stroke="#222" stroke-width="2"/><path d="M14 9c2 2 2 5 0 7M17 6c4 4 4 9 0 13M20 3c5 5 5 13 0 18" fill="none" stroke="#222" stroke-width="2"/></svg>
                <svg viewBox="0 0 24 24"><path d="M10 6h11v13H3v-6" fill="none" stroke="#222" stroke-width="2"/><path d="M6 17l4-9h9v9z" fill="#222"/><path d="M23 10v5M5 1L1 8h3v5l4-7H5z" fill="#222" stroke="#222"/></svg>
            </div>
            <div class="clock"><span>12:12</span><span>2024/11/17</span></div>
            <svg class="small" viewBox="0 0 24 24"><path d="M2 19l3-4V9a7 7 0 0 1 14 0v6l3 4zM8 20h8l-4 3z" fill="#222"/></svg>
        </div>
    </footer>

    <div class="edge-handle"></div>

    <!-- Select dialog -->
    <div class="dialog select-dialog" role="dialog" aria-label="Select">
        <header>
            <svg class="logo"><use href="#ad"/></svg>
            <span class="title">Select</span>
            <button class="win-btn" aria-label="Close"><svg width="18" height="18"><path d="M1 1l16 16M17 1L1 17" stroke="#111" stroke-width="2"/></svg></button>
        </header>
        <ul class="listbox">
            <li>chelun3.cm</li>
            <li>chelun3.SOLID6.E2 (center)</li>
            <li>chelun3.SOLID6.E5 (center)</li>
            <li>chelun3.SOLID6.E6 (center)</li>
            <li>chelun3.SOLID6.V1</li>
            <li>chelun3.SOLID6.V2</li>
            <li>dipan.SOLID5.E3 (center)</li>
            <li>dipan.SOLID5.E7 (center)</li>
            <li>dipan.SOLID5.E8 (center)</li>
            <li>dipan.SOLID5.V3</li>
            <li>dipan.SOLID5.V4</li>
            <li>dipan.SOLID5.V7</li>
        </ul>
        <div class="actions">
            <button class="btn">确定</button>
            <button class="btn">取消</button>
        </div>
        <svg class="cursor" viewBox="0 0 30 42"><path d="M2 3v36l8-8 6 10 6-3-5-9h11z" fill="#ff9cc0" stroke="#000" stroke-width="2"/></svg>
    </div>

    <!-- Simulation Control dialog -->
    <div class="dialog sim-dialog" role="dialog" aria-label="Simulation Control">
        <header>
            <svg class="logo"><use href="#ad"/></svg>
            <span class="title">Simulation Control</span>
            <button class="win-btn" aria-label="Close"><svg width="18" height="18"><path d="M1 1l16 16M17 1L1 17" stroke="#666"/></svg></button>
        </header>
        <div class="sim-play">
            <button class="btn" aria-label="Reset"><svg viewBox="0 0 44 44"><path d="M3 7h5v30H3zM25 7v30L10 22zM42 7v30L27 22z" fill="#21457e" stroke="#000"/></svg></button>
            <button class="btn" aria-label="Stop"><svg viewBox="0 0 44 44"><path d="M14 14h17v16H14z" fill="#21457e" stroke="#000"/></svg></button>
            <button class="btn" aria-label="Play"><svg viewBox="0 0 44 44"><path d="M15 7v30l15-15z" fill="#30b820" stroke="#000"/></svg></button>
            <button class="btn push" aria-label="Cycle"><svg viewBox="0 0 44 44"><path d="M4 9l4 4c8-10 23-12 31 0l-4 5c-6-8-14-8-22-1l5 3-12 3z" fill="#fff" stroke="#000" stroke-width="2"/><path d="M40 35l-4-3c-7 10-23 12-30-1l4-5c6 7 15 7 22 1l-4-3 11-4z" fill="#21457e" stroke="#000" stroke-width="2"/></svg></button>
            <button class="btn" aria-label="Verify"><svg viewBox="0 0 44 44"><path d="M5 23l5-4 7 8C23 16 30 8 38 4l3 3C33 14 27 23 19 38z" fill="#21457e"/></svg></button>
        </div>
        <div class="sim-frame">
            <div class="pair"><span class="combo"><select aria-label="时间类型"><option>终止时间</option></select></span><input class="field" type="text" value="5.0" aria-label="终止时间"></div>
            <div class="pair"><span class="combo"><select aria-label="步类型"><option>步数</option></select></span><input class="field" type="text" value="50" aria-label="步数"></div>
            <div class="pair"><label for="analysis">分析类型</label><span class="combo"><select id="analysis"><option>默认</option></select></span></div>
            <label class="check"><input type="checkbox">在平衡状态开始</label>
            <label class="check"><input type="checkbox">运行前复位</label>
            <span class="combo"><select aria-label="调试"><option>不调试</option></select></span>
            <hr>
            <div class="sim-tools">
                <button class="btn" aria-label="Equilibrium"><svg viewBox="0 0 44 44"><path d="M3 10l14 15h10L40 9v25l-4 3H3z" fill="#fff" stroke="#000" stroke-width="2"/><path d="M3 10l12 15 4-2L6 10zM36 13l4-3v24l-4 3z" fill="#21457e"/><circle cx="21" cy="22" r="7" fill="#00f"/></svg></button>
                <button class="btn" aria-label="Wrench"><svg viewBox="0 0 44 44"><path d="M5 34l13-14c-2-8 4-16 14-15l-5 7 4 8 9-3c2 8-7 13-15 10L12 40c-5 3-10-2-7-6z" fill="#21457e" stroke="#10284e"/><circle cx="30" cy="14" r="5" fill="#fff" stroke="#2c7cd8" stroke-width="3"/><circle cx="9" cy="37" r="2" fill="#fff"/></svg></button>
                <button class="btn" aria-label="Manual"><svg viewBox="0 0 44 44"><path d="M15 43c-2-7-10-13-12-20 3-4 7 2 10 5L10 11c2-5 6-2 7 4-1-12 7-12 8 0 1-12 8-9 8 2 2-8 7-5 7 2 0 8-5 15-6 24" fill="#fff" stroke="#000" stroke-width="2"/></svg></button>
                <button class="btn" aria-label="Linear"><svg viewBox="0 0 44 44"><use href="#plot-dots"/><path d="M18 8h9M27 3h12v11H27z" fill="#c4ccf4" stroke="#00f" stroke-width="3"/><path d="M36 31l5 5-5 5z"/></svg></button>
                <button class="btn" aria-label="Plant"><svg viewBox="0 0 44 44"><use href="#plot-dots"/><text x="22" y="17" text-anchor="middle" class="serif">P</text></svg></button>
                <button class="btn" aria-label="Matrices"><svg viewBox="0 0 44 44"><path d="M22 22V3h17v19zM22 22h17v17H22z" fill="#c4c4c4"/><path d="M7 4H3v36h4M37 4h4v36h-4" fill="none" stroke="#000" stroke-width="3"/><path d="M4 22h36M22 4v36" stroke="#777"/><g class="serif"><text x="6" y="20">A</text><text x="24" y="20">B</text><text x="6" y="39">C</text><text x="24" y="39">D</text></g></svg></button>
                <button class="btn" aria-label="Nastran"><svg viewBox="0 0 44 44"><path d="M1 15c8-12 12-8 16-2 4 3 6 3 9-1 4-7 10-7 17 2" fill="none" stroke="#00f" stroke-width="2"/><path d="M21 15v9" stroke="#000" stroke-width="3"/><path d="M15 23h12l-6 6z"/><text x="22" y="43" text-anchor="middle" class="nastran">Nastran</text></svg></button>
                <button class="btn last" aria-label="Vibration"><svg viewBox="0 0 44 44"><path d="M6 4v34M6 22h30" stroke="#111" stroke-width="3"/><path d="M12 38c6-14 10-4 14-1 6 4 9 2 15-6" fill="none" stroke="#000" stroke-width="2"/><path d="M30 38V22" stroke="#00f" stroke-width="4"/><path d="M24 23l6-8 6 8z" fill="#00f"/><circle cx="13" cy="17" r="2" fill="#234a84"/><circle cx="21" cy="16" r="2" fill="#234a84"/><circle cx="29" cy="11" r="2" fill="#234a84"/><circle cx="37" cy="5" r="2" fill="#234a84"/></svg></button>
            </div>
        </div>
        <label class="check update"><input type="checkbox" checked>更新图形显示</label>
        <div class="mode">
            <label><input type="radio" name="mode" checked>交互式</label>
            <label><input type="radio" name="mode">运行脚本</label>
        </div>
        <div class="sim-outputs">
            <button class="btn" aria-label="Save simulation"><svg viewBox="0 0 46 46"><use href="#opened"/><path d="M5 1h15v19H5z" fill="#fff" stroke="#000" stroke-width="2"/><path d="M9 1v19M16 1v19M9 7h7M9 13h7" stroke="#000" stroke-width="2"/></svg></button>
            <button class="btn" aria-label="Save model"><svg viewBox="0 0 46 46"><use href="#opened"/><path d="M7 19L16 6" stroke="#21457e" stroke-width="8" stroke-linecap="round"/><circle cx="7" cy="19" r="1" fill="#fff"/><circle cx="16" cy="6" r="1" fill="#fff"/></svg></button>
            <button class="btn" aria-label="Animation"><svg viewBox="0 0 46 46"><path d="M5 0h36v46H5z"/><path d="M12 0h22v13H12zM12 16h22v19H12zM12 39h22v7H12z" fill="#f8f8ff"/><path d="M8 2v44M38 2v44" stroke="#fff" stroke-width="3" stroke-dasharray="4 3"/><path d="M19 1l7 10M23 1l6 9M17 30l5-11 5 1-5 13-5-1zM20 46c0-5 6-5 6 0" stroke="#2020d0" stroke-width="1" fill="none"/></svg></button>
            <button class="btn" aria-label="Plot"><svg viewBox="0 0 46 46"><path d="M5 6v36M5 22h35M11 10h11M16 5v11M28 10h12" stroke="#111" stroke-width="3"/><circle cx="13" cy="27" r="2" fill="#234a84"/><circle cx="22" cy="28" r="2" fill="#234a84"/><circle cx="31" cy="33" r="2" fill="#234a84"/><circle cx="38" cy="40" r="2" fill="#234a84"/></svg></button>
            <button class="btn" aria-label="Postprocessor"><svg viewBox="0 0 46 46"><path d="M0 0h46v46H0z" fill="#fbfbfb"/><path d="M7 5v39M2 39h42" stroke="#111" stroke-width="3"/><path d="M2 6h5M2 17h5M2 28h5M15 39v5M24 39v5M33 39v5M42 39v5" stroke="#111" stroke-width="2"/><path d="M8 38c4-12 8-14 11-6 9 0 9-19 15-19 5 0 5 10 10 15" fill="none" stroke="#2020d8" stroke-width="2"/></svg></button>
        </div>
        <button class="btn wide">仿真设置...</button>
    </div>
</body>
</html>
```
FILE: styles.css
```css
* {
    box-sizing: border-box;
}
body {
    margin: 0;
    height: 100vh;
    display: flex;
    flex-direction: column;
    overflow: hidden;
    font-family: "Liberation Sans", "Noto Sans CJK SC", sans-serif;
    font-size: 19px;
    color: #111;
    background: linear-gradient(90deg, #c9cdd0, #cfd2d5 50%, #c8c6d2 80%);
}
button, input, select {
    font: inherit;
    color: inherit;
    margin: 0;
    border-radius: 0;
}
button {
    display: flex;
    align-items: center;
    justify-content: center;
    padding: 0;
    border: 0;
    background: none;
}
ul {
    list-style: none;
    margin: 0;
    padding: 0;
}
svg {
    display: block;
    flex: none;
}
.defs {
    position: absolute;
    width: 0;
    height: 0;
}

/* main window */
.desktop {
    flex: 1;
    min-height: 0;
    display: flex;
    padding-top: 3px;
    background: linear-gradient(#4a4340, #2c2622 20%, #8a6a50 30%, #2a1c16 40%, #33261f 70%, #25201e 90%, #1c2426) no-repeat;
    background-size: 100% calc(100% - 13px);
}
.wallpaper {
    width: 12px;
    flex: none;
    display: flex;
    flex-direction: column;
    padding-top: 395px;
    overflow: hidden;
}
.desk-label {
    height: 30px;
    padding-left: 5px;
    font-size: 18px;
    color: #fff;
}
.desk-label.low {
    margin-top: 980px;
}
.window {
    flex: 1;
    min-width: 0;
    display: flex;
    flex-direction: column;
    background: #e6eef8;
    border-radius: 12px 0 0 12px;
    overflow: hidden;
    box-shadow: 0 2px 6px rgba(0, 0, 0, 0.5);
}
.titlebar {
    height: 44px;
    flex: none;
    display: flex;
    align-items: center;
    padding: 0 0 3px 12px;
    background: #f3f3f3;
    color: #777;
}
.logo {
    width: 24px;
    height: 24px;
}
.title {
    flex: 1;
    margin-left: 6px;
    font-family: "Open Sans", sans-serif;
    font-size: 17px;
}
.titlebar .win-btn {
    width: 70px;
    margin-right: 0;
}
.titlebar .win-btn:last-child {
    margin-right: -13px;
}
.ad-text {
    font-family: Roboto, sans-serif;
    font-size: 14px;
    font-weight: bold;
    fill: #b0213f;
}

/* menu and toolbar */
.topbar {
    height: 45px;
    flex: none;
    display: flex;
    background: linear-gradient(90deg, #f0f8ff 60%, #e2ecf7);
}
.menu {
    width: 341px;
    flex: none;
    display: flex;
    align-items: center;
    gap: 13px;
    padding: 0 0 6px 7px;
}
.menu a {
    color: #1414d0;
    text-decoration: none;
}
.grip {
    width: 8px;
    margin: 2px 7px 4px 0;
    border: solid #999;
    border-width: 0 2px;
}
.tools {
    display: flex;
    align-items: center;
    padding: 0 2px 0 4px;
    border-left: 2px solid #aaa;
}
.tools.spaced {
    gap: 1px;
    padding-left: 6px;
}
.tool {
    position: relative;
    width: 42px;
    height: 42px;
}
.tool.drop {
    width: 54px;
}
.tool svg {
    width: 36px;
    height: 36px;
}
.drop::after {
    content: "";
    position: absolute;
    right: 4px;
    bottom: 5px;
    border: solid transparent;
    border-width: 5px 0 5px 5px;
    border-left-color: #000;
}
.step {
    margin: 0 1px 0 2px;
}
.step-input, .field, .search {
    padding: 0 8px;
    border: 2px solid;
    border-color: #858585 #f4f4f4 #f4f4f4 #858585;
    background: #fff;
    outline: 0;
}
.step-input {
    width: 104px;
    height: 42px;
    margin-right: 5px;
}
.help {
    position: relative;
}
.help svg {
    width: 46px;
    height: 44px;
}
.help-text {
    font-size: 32px;
    font-weight: bold;
    fill: #fff;
}

/* tabs and ribbon */
.tabs {
    height: 35px;
    flex: none;
    display: flex;
    align-items: flex-end;
    gap: 2px;
    padding-left: 4px;
    background: #d0dfee;
}
.tab {
    height: 32px;
    padding: 0 16px 3px;
    border-top: 2px solid #f4f8fc;
    border-left: 1px solid #f4f8fc;
    border-right: 2px solid #808890;
    background: #c6d3e4;
    color: #1414d0;
    white-space: nowrap;
}
.tab.active {
    height: 100%;
    margin: 0 -2px;
    padding: 0 18px 2px;
    border: 0;
    background: #fcfdff;
}
.tab.latin {
    padding: 0 18px 3px;
}
.ribbon {
    flex: none;
    display: flex;
    gap: 8px;
    height: 160px;
    padding: 7px 8px 7px 9px;
    border-top: 2px solid #f6f9fd;
    border-bottom: 3px solid #7c8796;
    background: linear-gradient(#e9f0f8, #cfdbe7 40%, #9fb4c9);
}
.group {
    width: 278px;
    display: flex;
    flex-direction: column;
    padding: 2px 2px 0;
    border: 2px solid #a6acb4;
    outline: 1px solid #f8fafc;
    background: #e6eef8;
}
.icons {
    flex: 1;
    display: grid;
    grid-template-columns: 1fr;
    grid-auto-rows: 36px;
    row-gap: 10px;
    align-content: center;
    justify-items: center;
    padding-left: 2px;
}
.icons.five {
    grid-template-columns: repeat(5, 1fr);
}
.icons.three {
    grid-template-columns: repeat(3, 1fr);
}
.icons.two {
    grid-template-columns: repeat(2, 1fr);
}
.icons svg {
    width: 36px;
    height: 36px;
}
.group h2 {
    margin: 0;
    height: 34px;
    line-height: 34px;
    font-size: 19px;
    font-weight: normal;
    text-align: center;
    color: #1414d0;
    background: #d0dfee;
}
.gcn {
    font-size: 15px;
    font-weight: bold;
}

/* left side */
.main {
    flex: 1;
    min-height: 0;
    display: flex;
}
.side {
    width: 293px;
    flex: none;
    display: flex;
    flex-direction: column;
    margin-bottom: 5px;
    border-right: 3px solid #858d98;
    border-bottom: 2px solid #858585;
    background: #ebf4fe;
}
.rails {
    height: 9px;
    flex: none;
    margin: 1px 4px 0 3px;
    border: solid #a2a8b0;
    border-width: 2px 1px 2px 0;
    background: linear-gradient(#fff 2px, #a2a8b0 2px, #a2a8b0 3px, #fff 3px);
}
.joint-form {
    height: 433px;
    display: flex;
    flex-direction: column;
    padding: 23px 10px 0 12px;
}
.joint-form h3 {
    margin: 0 -3px 12px;
    height: 40px;
    line-height: 30px;
    font-size: 19px;
    font-weight: normal;
    border-bottom: 2px solid #a2a8b0;
}
.joint-form > label {
    height: 36px;
    line-height: 30px;
}
.joint-form > .combo {
    margin: 0 0 4px;
}
.pick {
    display: flex;
    align-items: center;
    margin: 0 6px 5px -2px;
}
.pick label {
    width: 89px;
    padding-bottom: 2px;
}
.combo {
    position: relative;
    display: block;
    flex: 1;
    height: 36px;
    border: 2px solid;
    border-color: #858585 #858585 #f4f4f4 #858585;
    background: #fff;
}
.joint-form > .combo, .browser > .combo, .sim-frame > .combo {
    flex: none;
}
.combo select {
    appearance: none;
    width: 100%;
    height: 100%;
    padding: 0 26px 0 7px;
    border: 0;
    background: none;
    outline: 0;
}
.combo::before {
    content: "";
    position: absolute;
    top: 1px;
    right: 0;
    bottom: 0;
    width: 24px;
    border: 2px solid;
    border-color: #f8f8f8 #858585 #858585 #f8f8f8;
    background: #f0f0f0;
    pointer-events: none;
}
.combo::after {
    content: "";
    position: absolute;
    top: 12px;
    right: 6px;
    border: solid transparent;
    border-width: 7px 6px 0;
    border-top-color: #000;
    pointer-events: none;
}
.browser {
    flex: 1;
    min-height: 0;
    display: flex;
    flex-direction: column;
    padding: 3px 5px 3px 6px;
    background: #d8e5f4;
}
.side-tabs {
    height: 40px;
    margin-top: 6px;
    padding-left: 0;
}
.side-tabs .tab {
    height: 36px;
    padding: 0 15px 4px;
}
.side-tabs .tab.active {
    height: 40px;
    margin-left: 0;
    padding: 0 17px 2px;
}
.tree {
    flex: 1;
    min-height: 0;
    overflow: hidden;
    padding-top: 1px;
    border-top: 7px solid #f6faff;
    border-left: 2px solid #858585;
    background: #f0f8ff;
    box-shadow: inset 0 2px #858585;
}
.tree ul {
    margin-left: 30px;
}
.tree li {
    position: relative;
}
/* dotted guide down the left of every branch */
.tree li::before {
    content: "";
    position: absolute;
    left: 16px;
    top: 0;
    bottom: 0;
    border-left: 1px dotted #333;
}
.tree li:last-child::before {
    bottom: auto;
    height: 15px;
}
.row {
    position: relative;
    height: 30px;
    display: flex;
    align-items: center;
    padding-left: 10px;
}
.row svg {
    width: 25px;
    height: 25px;
    margin-right: 1px;
}
.toggle {
    width: 13px;
    height: 13px;
    border: 1px solid #808080;
    background: #fff;
    font-size: 15px;
    font-weight: bold;
    line-height: 9px;
}
.row i {
    width: 6px;
    margin: 0 1px 0 2px;
    border-top: 1px dotted #333;
}
.row.leaf i {
    width: 13px;
    margin-left: 8px;
}
.search {
    height: 34px;
    flex: none;
    margin-top: 4px;
}

/* 3D view */
.view {
    flex: 1;
    min-width: 0;
    background: linear-gradient(#3333cc, #000 97%);
}
.scene {
    width: 100%;
    height: 100%;
    font-size: 18px;
}
.labels {
    fill: #b4b4be;
}
.letters {
    font-size: 17px;
    fill: #b4b4be;
}
.letters.bright {
    fill: #fff;
}
.axis {
    fill: none;
    stroke: #b4b4c8;
    stroke-width: 2;
}

/* status bar */
.status {
    height: 45px;
    flex: none;
    display: flex;
    justify-content: space-between;
    padding-left: 7px;
}
.mesh {
    width: 30px;
    height: 32px;
    margin-top: 4px;
}
.status-icons {
    width: 1099px;
    display: flex;
    justify-content: flex-end;
    align-items: center;
    gap: 5px;
    padding-bottom: 8px;
    border-top: 3px solid #b0b4b8;
    margin-right: -9px;
}
.status-icons svg {
    width: 34px;
    height: 34px;
}

/* taskbar */
.taskbar {
    position: relative;
    height: 59px;
    flex: none;
    display: flex;
    align-items: flex-start;
    justify-content: space-between;
    font-family: "Open Sans", "Noto Sans CJK SC", sans-serif;
    font-size: 17px;
    color: #222;
}
.weather, .tray {
    display: flex;
    line-height: 24px;
}
.weather svg {
    width: 44px;
    height: 44px;
    margin: 0 7px 0 25px;
}
.weather b {
    font-weight: normal;
}
.weather b, .weather span, .clock span {
    display: block;
}
.badge {
    font-size: 17px;
    fill: #fff;
}
.apps {
    position: absolute;
    left: 35%;
    display: flex;
    align-items: center;
    height: 52px;
    gap: 10px;
}
.app {
    position: relative;
    width: 56px;
    height: 52px;
}
.app:first-child {
    width: 38px;
    margin-right: 8px;
}
.app svg {
    width: 36px;
    height: 36px;
    margin-bottom: 4px;
}
.app.open::after {
    content: "";
    position: absolute;
    bottom: 1px;
    width: 9px;
    height: 5px;
    border-radius: 3px;
    background: #777;
}
.app.current {
    background: #e6e7e9;
    border-radius: 0 0 6px 6px;
}
.app.current::after {
    width: 24px;
    background: #333;
}
.task-search {
    display: flex;
    align-items: center;
    width: 326px;
    height: 44px;
    padding: 0 2px 0 16px;
    border-radius: 22px;
    background: #e2e3e3;
    box-shadow: 0 1px 2px #999;
    margin-bottom: 6px;
}
.task-search svg {
    width: 24px;
    height: 24px;
}
.task-search input {
    flex: 1;
    min-width: 0;
    padding: 0 14px;
    border: 0;
    background: none;
    font-size: 21px;
    color: #555;
}
.task-search .art {
    width: 70px;
    height: 40px;
}
.tray {
    align-items: center;
    height: 46px;
    padding-right: 29px;
}
.small {
    width: 26px;
    height: 26px;
    margin-right: 22px;
}
.small:last-child {
    margin: 0;
}
.lang {
    margin: 0 28px 0 6px;
}
.sys {
    display: flex;
    gap: 12px;
    margin-right: 25px;
}
.sys svg {
    width: 24px;
    height: 24px;
}
.clock {
    margin-right: 12px;
    text-align: right;
}
.edge-handle {
    position: absolute;
    top: 80px;
    right: 0;
    width: 12px;
    height: 78px;
    border: 2px solid #66727e;
    border-right: 0;
    border-radius: 8px 0 0 8px;
    background: linear-gradient(90deg, #e8f2fb, #8fb4d4);
}

/* floating dialogs */
.dialog {
    position: absolute;
    display: flex;
    flex-direction: column;
    border: 1px solid #70747c;
    border-radius: 10px;
    background: #f0f0f0;
    box-shadow: 0 8px 28px rgba(0, 0, 0, 0.4);
}
.dialog header {
    height: 45px;
    flex: none;
    display: flex;
    align-items: center;
    padding: 0 15px 3px 12px;
    border-radius: 9px 9px 0 0;
}
.btn {
    border: 2px solid;
    border-color: #fafafa #858585 #858585 #fafafa;
    background: #f0f0f0;
}
.select-dialog {
    left: 1436px;
    top: 114px;
    width: 302px;
    height: 497px;
    padding-bottom: 6px;
}
.select-dialog header {
    background: linear-gradient(90deg, #f6f2da, #f9f4d0 60%, #f0f4d2);
}
.listbox {
    flex: 1;
    margin: 6px 7px 3px 6px;
    padding: 2px 6px;
    border: 2px solid;
    border-color: #858585 #f4f4f4 #f4f4f4 #858585;
    background: #fff;
    font-family: "Liberation Mono", monospace;
    font-size: 17px;
    line-height: 24px;
    white-space: nowrap;
}
.actions {
    display: flex;
    justify-content: space-between;
    padding: 0 6px;
}
.actions .btn {
    width: 114px;
    height: 38px;
}
.cursor {
    position: absolute;
    left: 128px;
    top: 73px;
    width: 30px;
    height: 42px;
}
.sim-dialog {
    right: 169px;
    top: 287px;
    width: 396px;
    height: 682px;
    background: #e6eef8;
}
.sim-dialog header {
    background: #f3f3f3;
    color: #808080;
}
.sim-play {
    display: flex;
    gap: 3px;
    padding: 5px 8px 4px 7px;
}
.sim-play .btn, .sim-tools .btn {
    width: 54px;
    height: 54px;
}
.sim-play svg, .sim-tools svg {
    width: 44px;
    height: 44px;
}
.push {
    margin-left: auto;
}
.sim-frame {
    display: flex;
    flex-direction: column;
    gap: 5px;
    height: 374px;
    margin: 0 9px 0 8px;
    padding: 7px 6px 2px 5px;
    border: 1px solid #a2a8b0;
    outline: 1px solid #fafcff;
}
.pair {
    display: grid;
    grid-template-columns: 1fr 1fr;
    gap: 5px;
    height: 36px;
    line-height: 34px;
}
.pair .field {
    min-width: 0;
    padding-top: 3px;
}
.pair label {
    padding-left: 7px;
}
.check {
    display: flex;
    align-items: center;
    gap: 10px;
    height: 35px;
}
.check input {
    appearance: none;
    width: 18px;
    height: 18px;
    border: 2px solid;
    border-color: #858585 #fff #fff #858585;
    background: #fff;
}
.check input:checked::after {
    content: "";
    display: block;
    width: 12px;
    height: 12px;
    margin: 1px;
    background: #000;
    clip-path: polygon(0 40%, 35% 65%, 100% 0, 100% 35%, 35% 100%, 0 75%);
}
.sim-frame hr {
    width: 100%;
    margin: 0;
    border: 0;
    border-top: 1px solid #a2a8b0;
}
.sim-tools {
    display: grid;
    grid-template-columns: repeat(6, 54px);
    justify-content: space-between;
    row-gap: 4px;
    padding-right: 2px;
}
.sim-tools .last {
    grid-column: 6;
}
.serif {
    font-family: "Liberation Serif", serif;
    font-size: 20px;
    font-weight: bold;
}
.nastran {
    font-size: 13px;
}
.check.update {
    margin: 6px 0 8px 7px;
}
.mode {
    display: flex;
    align-items: center;
    gap: 18px;
    height: 37px;
    margin: 0 5px 3px 4px;
    padding-left: 3px;
    border: 2px solid;
    border-color: #a2a8b0 #fafcff #fafcff #a2a8b0;
}
.mode label {
    display: flex;
    align-items: center;
    gap: 12px;
}
.mode input {
    appearance: none;
    width: 16px;
    height: 16px;
    border: 2px solid;
    border-color: #858585 #fff #fff #858585;
    border-radius: 50%;
    background: #fff;
}
.mode input:checked {
    background: radial-gradient(#000 3px, #fff 4px);
}
.sim-outputs {
    display: flex;
    justify-content: space-between;
    margin: 0 4px 3px;
}
.sim-outputs .btn {
    width: 57px;
    height: 57px;
}
.sim-outputs svg {
    width: 46px;
    height: 46px;
}
.wide {
    height: 45px;
    margin: 0 3px 0 4px;
}
```
